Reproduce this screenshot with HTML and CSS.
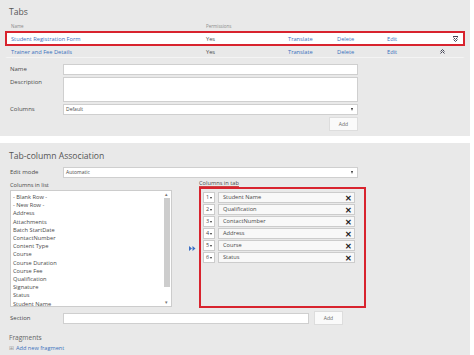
FILE: index.html
```html
<!DOCTYPE html>
<html lang="en">
  <head>
    <meta charset="UTF-8" />
    <title>Tabs</title>
    <link rel="stylesheet" href="styles.css">
  </head>
  <body>
    <!-- Tabs panel -->
    <div class="panel tabs-panel">
      <div class="panel-title">Tabs</div>
      <div class="tab-grid tab-head">
        <span>Name</span><span>Permissions</span><span></span><span></span><span></span><span></span>
      </div>
      <div class="tab-grid tab-row selected">
        <a>Student Registration Form</a><span>Yes</span><a>Translate</a><a>Delete</a><a>Edit</a>
        <span class="move down">
          <svg width="5" height="6" viewBox="0 0 5 6"><path d="M0 0.5h5M0.5 1.5l2 2 2-2M0.5 3.5l2 2 2-2" stroke="#445" stroke-width="1" fill="none"/></svg>
        </span>
      </div>
      <div class="tab-grid tab-row">
        <a>Trainer and Fee Details</a><span>Yes</span><a>Translate</a><a>Delete</a><a>Edit</a>
        <span class="move up">
          <svg width="5" height="6" viewBox="0 0 5 6"><path d="M0.5 2.5l2-2 2 2M0.5 4.5l2-2 2 2" stroke="#445" stroke-width="1" fill="none"/></svg>
        </span>
      </div>

      <div class="form">
        <label>Name</label><div class="field"></div>
        <label>Description</label><div class="field area"></div>
        <label>Columns</label><div class="field select">Default<span class="caret"></span></div>
      </div>
      <div class="add-line"><button class="btn">Add</button></div>
    </div>

    <!-- Tab-column association panel -->
    <div class="panel assoc-panel">
      <div class="panel-title">Tab-column Association</div>
      <div class="form">
        <label>Edit mode</label><div class="field select">Automatic<span class="caret"></span></div>
      </div>

      <div class="columns">
        <div class="col-list">
          <div class="small-label">Columns in list</div>
          <div class="listbox">
            <div class="items">
              <div>- Blank Row -</div>
              <div>- New Row -</div>
              <div>Address</div>
              <div>Attachments</div>
              <div>Batch StartDate</div>
              <div>ContactNumber</div>
              <div>Content Type</div>
              <div>Course</div>
              <div>Course Duration</div>
              <div>Course Fee</div>
              <div>Qualification</div>
              <div>Signature</div>
              <div>Status</div>
              <div>Student Name</div>
            </div>
            <div class="scrollbar"><span class="arr">▴</span><span class="thumb"></span><span class="arr">▾</span></div>
          </div>
        </div>
        <div class="mover">
          <svg width="7" height="5" viewBox="0 0 7 5"><path d="M0 0l3 2.5-3 2.5zM3.5 0l3 2.5-3 2.5z" fill="#3b6fc4"/></svg>
        </div>
        <div class="col-tab">
          <div class="small-label">Columns in tab</div>
          <div class="tab-box">
            <div class="tc-row"><span class="num">1<i></i></span><span class="tc-name">Student Name</span><span class="x">✕</span></div>
            <div class="tc-row"><span class="num">2<i></i></span><span class="tc-name">Qualification</span><span class="x">✕</span></div>
            <div class="tc-row"><span class="num">3<i></i></span><span class="tc-name">ContactNumber</span><span class="x">✕</span></div>
            <div class="tc-row"><span class="num">4<i></i></span><span class="tc-name">Address</span><span class="x">✕</span></div>
            <div class="tc-row"><span class="num">5<i></i></span><span class="tc-name">Course</span><span class="x">✕</span></div>
            <div class="tc-row"><span class="num">6<i></i></span><span class="tc-name">Status</span><span class="x">✕</span></div>
          </div>
        </div>
      </div>

      <div class="section-line">
        <label>Section</label><div class="field section-field"></div><button class="btn">Add</button>
      </div>

      <div class="fragments">Fragments</div>
      <div class="new-fragment"><span class="plus">⊞</span><a>Add new fragment</a></div>
    </div>
  </body>
</html>
```

FILE: styles.css
```css
body {
  margin: 0;
  background: #fff;
  font-family: "Open Sans", "Noto Sans", sans-serif;
  font-size: 5.7px;
  color: #4a4a4a;
}

a {
  color: #3a70bd;
}

.panel {
  width: 470px;
  background: #e9e9e9;
  box-sizing: border-box;
}

.tabs-panel {
  height: 136px;
  padding: 4px 0 0 0;
}

.assoc-panel {
  margin-top: 7px;
  height: 212px;
  padding: 5px 0 0 0;
}

.panel-title {
  font-size: 8.6px;
  color: #555;
  padding-left: 9px;
  line-height: 16px;
}

/* tabs table */
.tab-grid {
  display: grid;
  grid-template-columns: 195px 82px 49px 50px 53px 1fr;
  align-items: center;
  margin: 0 5px;
  padding-left: 4px;
  border: 2px solid transparent;
}

.tab-head {
  font-size: 4.5px;
  color: #8a8a8a;
  height: 6px;
  margin-top: 1px;
}

.tab-row {
  height: 11px;
}

.tab-row.selected {
  background: #fff;
  border-color: #d8232e;
}

.tab-row + .tab-row {
  border-width: 0 2px 1px;
  border-bottom-color: #f4f4f4;
}

.move {
  display: flex;
}

.move.down {
  padding-left: 13px;
}

.move.up {
  padding-left: 0;
}

/* forms */
.form {
  display: grid;
  grid-template-columns: 53px 295px;
  row-gap: 2px;
  margin-left: 10px;
  align-items: start;
}

.tabs-panel .form {
  margin-top: 6px;
}

.form label {
  line-height: 11px;
  font-size: 6px;
}

.field {
  height: 9px;
  background: #fff;
  border: 1px solid #cfcfcf;
  line-height: 9px;
  padding-left: 2px;
  position: relative;
  font-size: 5px;
}

.field.area {
  height: 23px;
}

.caret {
  position: absolute;
  right: 4px;
  top: 3px;
  border-left: 1.5px solid transparent;
  border-right: 1.5px solid transparent;
  border-top: 3px solid #333;
}

.add-line {
  display: flex;
  justify-content: flex-end;
  width: 358px;
  margin-top: 2px;
}

.btn {
  font-family: inherit;
  font-size: 5px;
  color: #666;
  background: #fafafa;
  border: 1px solid #ddd;
  width: 29px;
  height: 14px;
  padding: 0;
}

/* association */
.assoc-panel .form {
  margin-top: 3px;
}

.columns {
  display: flex;
  margin-left: 10px;
  margin-top: 1px;
}

.small-label {
  line-height: 10px;
}

.col-list .small-label {
  margin-top: 1px;
}

.listbox {
  width: 162px;
  height: 117px;
  background: #fff;
  border: 1px solid #ccc;
  box-sizing: border-box;
  display: flex;
}

.items {
  flex: 1;
  padding: 2px 0 0 2px;
  line-height: 8.2px;
  color: #4a4a4a;
}

.scrollbar {
  width: 7px;
  margin-right: 1px;
  display: flex;
  flex-direction: column;
  align-items: center;
  font-size: 5px;
  color: #777;
}

.scrollbar .arr {
  line-height: 7px;
}

.thumb {
  width: 6px;
  flex: 1;
  background: #cdcdcd;
  margin: 0 0 12px;
}

.mover {
  width: 27px;
  display: flex;
  align-items: flex-start;
  padding: 67px 0 0 17px;
  box-sizing: border-box;
}

.col-tab .small-label {
  line-height: 8px;
  text-decoration: underline;
  text-decoration-color: #c44;
}

.tab-box {
  width: 167px;
  height: 121px;
  border: 2px solid #d8232e;
  box-sizing: border-box;
  padding: 3px 0 0 2px;
}

.tc-row {
  display: flex;
  align-items: center;
  height: 11px;
  margin-bottom: 1px;
  width: 152px;
}

.num {
  width: 12px;
  height: 11px;
  background: #fff;
  border: 1px solid #ccc;
  box-sizing: border-box;
  padding-left: 2px;
  line-height: 9px;
  font-size: 5.5px;
  position: relative;
}

.num i {
  position: absolute;
  right: 2px;
  top: 3.5px;
  border-left: 1.5px solid transparent;
  border-right: 1.5px solid transparent;
  border-top: 2.5px solid #333;
}

.tc-name {
  flex: 1;
  margin-left: 3px;
  height: 11px;
  background: #f8f8f8;
  border: 1px solid #ccc;
  box-sizing: border-box;
  padding-left: 4px;
  line-height: 9px;
  color: #4a4a4a;
}

.x {
  font-size: 8px;
  font-weight: bold;
  color: #222;
  margin-left: -10px;
  width: 10px;
}

.section-line {
  display: flex;
  align-items: center;
  margin: 3px 0 0 10px;
}

.section-line label {
  width: 53px;
  font-size: 6px;
}

.section-field {
  width: 242px;
  height: 9px;
}

.section-line .btn {
  margin-left: 5px;
}

.fragments {
  margin: 8px 0 0 9px;
  font-size: 6.6px;
  color: #666;
}

.new-fragment {
  margin: 2px 0 0 9px;
  font-size: 5.6px;
}

.plus {
  color: #999;
  font-size: 6px;
  margin-right: 2px;
}
```
